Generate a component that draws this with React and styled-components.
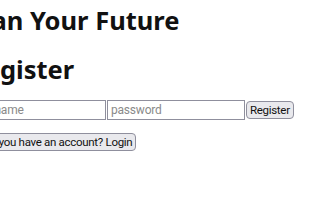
import React from 'react'
import styled, { createGlobalStyle } from 'styled-components'

const GlobalStyle = createGlobalStyle`
  body {
    margin: 0;
    background: #fff;
    font-family: Roboto, "Noto Sans", sans-serif;
  }
`

const Page = styled.div`
  margin-left: -32px;
  padding-top: 3px;
`

const Title = styled.h1`
  margin: 0 0 ${(p) => p.$gap || 0}px;
  font-family: "Noto Sans", "DejaVu Sans", sans-serif;
  font-size: 25.5px;
  line-height: 34px;
  font-weight: 700;
  color: #111;
  white-space: nowrap;
`

const Form = styled.form`
  display: flex;
  align-items: center;
  gap: 1px;
  margin-bottom: 11px;
`

const Input = styled.input`
  box-sizing: border-box;
  width: 138px;
  height: 20px;
  padding: 1px 3px;
  border: 1px solid #8f8f9d;
  border-radius: 0;
  font-family: inherit;
  font-size: 12px;
  letter-spacing: -0.2px;
  color: #111;
  &::placeholder {
    color: #8a8a8a;
  }
`

const Button = styled.button`
  box-sizing: border-box;
  height: 18px;
  padding: 0 3px;
  border: 1px solid #8f8f9d;
  border-radius: 4px;
  background: #e9e9ed;
  font-family: inherit;
  font-size: 11.5px;
  letter-spacing: -0.3px;
  line-height: 16px;
  color: #111;
  white-space: nowrap;
`

export default function App() {
  return (
    <Page>
      <GlobalStyle />
      <Title $gap={15}>Plan Your Future</Title>
      <Title $gap={14}>Register</Title>
      <Form onSubmit={(e) => e.preventDefault()}>
        <Input placeholder="username" />
        <Input type="password" placeholder="password" />
        <Button type="submit">Register</Button>
      </Form>
      <Button type="button">Don't you have an account? Login</Button>
    </Page>
  )
}
